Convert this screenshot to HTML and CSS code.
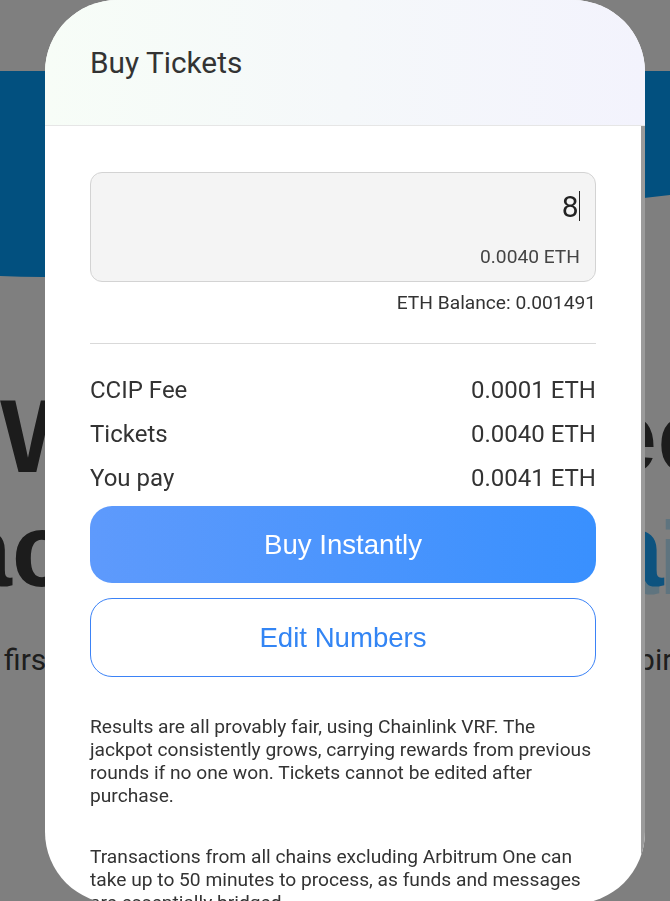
FILE: index.html
```html
<!DOCTYPE html>
<html lang="en">
<head>
<meta charset="utf-8">
<title>Buy Tickets</title>
<link rel="stylesheet" href="styles.css">
</head>
<body>
<div class="page">
  <div class="nav"></div>
  <div class="banner">
    <svg class="banner-shape" viewBox="0 0 670 210" width="670" height="210" preserveAspectRatio="none" aria-hidden="true">
      <path d="M0 0 H670 V124 C420 150 200 215 0 205 Z" fill="#04a0fe"/>
    </svg>
  </div>
  <section class="hero">
    <div class="hero-line line-one"><span>W</span><span>ec</span></div>
    <div class="hero-line line-two"><span class="hero-start">ac</span><span class="hero-accent">ain</span></div>
    <p class="hero-sub"><span>first</span><span>pire</span></p>
  </section>
</div>

<div class="overlay">
  <div class="modal">
    <div class="modal-header">
      <h2 class="modal-title">Buy Tickets</h2>
    </div>
    <div class="modal-main">
      <div class="modal-body">
        <div class="ticket-input">
          <div class="ticket-count">8<span class="caret"></span></div>
          <div class="ticket-cost">0.0040 ETH</div>
        </div>
        <div class="balance">ETH Balance: 0.001491</div>
        <div class="divider"></div>
        <div class="summary">
          <div class="summary-row"><span>CCIP Fee</span><span>0.0001 ETH</span></div>
          <div class="summary-row"><span>Tickets</span><span>0.0040 ETH</span></div>
          <div class="summary-row"><span>You pay</span><span>0.0041 ETH</span></div>
        </div>
        <button class="btn btn-primary" type="button">Buy Instantly</button>
        <button class="btn btn-outline" type="button">Edit Numbers</button>
        <p class="note">Results are all provably fair, using Chainlink VRF. The jackpot consistently grows, carrying rewards from previous rounds if no one won. Tickets cannot be edited after purchase.</p>
        <p class="note">Transactions from all chains excluding Arbitrum One can take up to 50 minutes to process, as funds and messages are essentially bridged.</p>
      </div>
      <div class="scroll-track"></div>
    </div>
  </div>
</div>
</body>
</html>
```
FILE: styles.css
```css
html, body {
  margin: 0;
  padding: 0;
}

body {
  width: 670px;
  height: 901px;
  overflow: hidden;
  background: #ffffff;
  font-family: Roboto, "Liberation Sans", Arial, sans-serif;
}

.page {
  width: 670px;
  overflow: hidden;
}

.nav {
  height: 71px;
}

.banner {
  height: 210px;
}

.banner-shape {
  display: block;
}

.hero {
  padding-top: 98px;
  color: #383838;
}

.hero-line {
  display: flex;
  justify-content: space-between;
  white-space: nowrap;
  font-family: "Liberation Sans", Arial, sans-serif;
  font-weight: 700;
  font-size: 104px;
  line-height: 114px;
}

.line-one {
  margin-right: -45px;
}

.line-two {
  margin-left: -46px;
  margin-right: -86px;
}

.hero-accent {
  color: #1aa6ff;
  text-shadow: -5px 8px 0 rgba(170, 225, 255, 0.75);
}

.hero-sub {
  display: flex;
  justify-content: space-between;
  white-space: nowrap;
  margin: 35px -18px 0 4px;
  font-size: 30px;
  line-height: 36px;
  color: #3c3c3c;
}

.overlay {
  position: fixed;
  inset: 0;
  background: rgba(0, 0, 0, 0.5);
  display: flex;
  justify-content: flex-start;
  align-items: flex-start;
  padding-left: 45px;
}

.modal {
  width: 600px;
  height: 904px;
  flex-shrink: 0;
  border-radius: 72px;
  overflow: hidden;
  background: #ffffff;
  display: flex;
  flex-direction: column;
}

.modal-header {
  height: 125px;
  flex-shrink: 0;
  display: flex;
  align-items: center;
  padding: 0 45px;
  border-bottom: 1px solid #e6e6e6;
  background: linear-gradient(90deg, #f7fdf7 0%, #f3f3fd 100%);
}

.modal-title {
  margin: 0;
  font-weight: 400;
  font-size: 29.8px;
  color: #333333;
}

.modal-main {
  flex: 1;
  display: flex;
  min-height: 0;
}

.modal-body {
  width: 596px;
  box-sizing: border-box;
  padding: 46px 45px 0;
  overflow: hidden;
}

.scroll-track {
  width: 4px;
  background: #9b9b9b;
}

.ticket-input {
  border: 1px solid #d3d3d3;
  border-radius: 12px;
  background: #f4f4f4;
  padding: 16px 15px 13px;
  display: flex;
  flex-direction: column;
  align-items: flex-end;
}

.ticket-count {
  font-size: 30px;
  line-height: 36px;
  color: #222222;
}

.caret {
  display: inline-block;
  width: 1.5px;
  height: 30px;
  background: #222222;
  vertical-align: -4px;
}

.ticket-cost {
  margin-top: 20px;
  font-size: 19.2px;
  line-height: 23px;
  color: #444444;
}

.balance {
  margin-top: 9px;
  text-align: right;
  font-size: 19.2px;
  line-height: 23px;
  color: #333333;
}

.divider {
  height: 1px;
  background: #d9d9d9;
  margin: 29px 0 24px;
}

.summary-row {
  display: flex;
  justify-content: space-between;
  font-size: 24px;
  line-height: 44px;
  color: #333333;
}

.btn {
  display: flex;
  align-items: center;
  justify-content: center;
  width: 100%;
  box-sizing: border-box;
  border-radius: 22px;
  font-family: "Liberation Sans", Arial, sans-serif;
  font-weight: 400;
  font-size: 27.6px;
  padding: 0;
  cursor: pointer;
}

.btn-primary {
  height: 77px;
  margin-top: 6px;
  border: 0;
  color: #ffffff;
  background: linear-gradient(90deg, #5e9afc 0%, #3990fe 100%);
}

.btn-outline {
  height: 79px;
  margin-top: 15px;
  border: 1px solid #3b82f6;
  color: #3385f4;
  background: #ffffff;
}

.note {
  margin: 38px 0 0;
  font-size: 19.2px;
  line-height: 23px;
  color: #333333;
}
```
